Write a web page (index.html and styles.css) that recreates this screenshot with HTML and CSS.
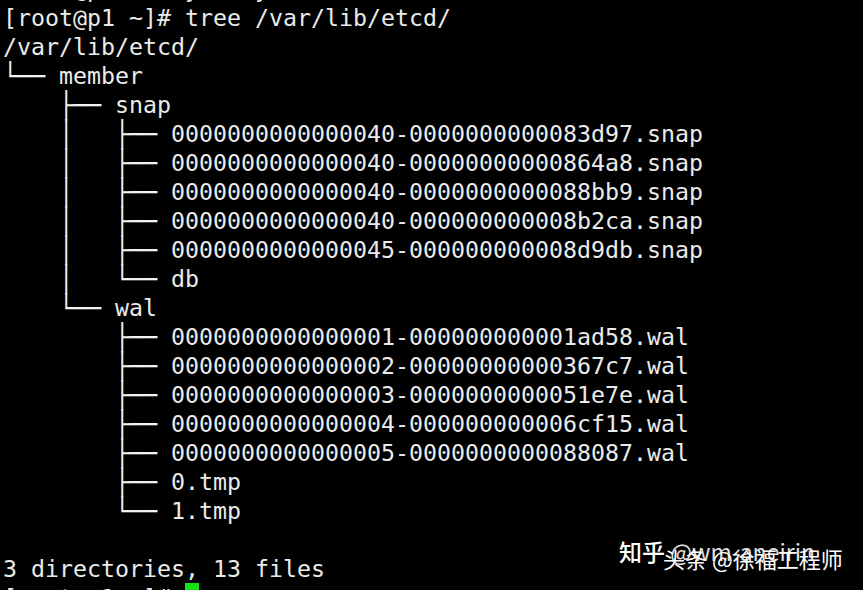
FILE: index.html
```html
<!DOCTYPE html>
<html lang="en">
<head>
<meta charset="utf-8">
<title>tree /var/lib/etcd/</title>
<link rel="stylesheet" href="styles.css">
</head>
<body>
<main class="term">
<div class="line">[root@p1 ~]# yum -y install tree</div>
<div class="line">[root@p1 ~]# tree /var/lib/etcd/</div>
<div class="line">/var/lib/etcd/</div>
<div class="line"><span class="br">└──</span> member</div>
<div class="line"><span class="br">    ├──</span> snap</div>
<div class="line"><span class="br">    │   ├──</span> 0000000000000040-0000000000083d97.snap</div>
<div class="line"><span class="br">    │   ├──</span> 0000000000000040-00000000000864a8.snap</div>
<div class="line"><span class="br">    │   ├──</span> 0000000000000040-0000000000088bb9.snap</div>
<div class="line"><span class="br">    │   ├──</span> 0000000000000040-000000000008b2ca.snap</div>
<div class="line"><span class="br">    │   ├──</span> 0000000000000045-000000000008d9db.snap</div>
<div class="line"><span class="br">    │   └──</span> db</div>
<div class="line"><span class="br">    └──</span> wal</div>
<div class="line"><span class="br">        ├──</span> 0000000000000001-000000000001ad58.wal</div>
<div class="line"><span class="br">        ├──</span> 0000000000000002-00000000000367c7.wal</div>
<div class="line"><span class="br">        ├──</span> 0000000000000003-0000000000051e7e.wal</div>
<div class="line"><span class="br">        ├──</span> 0000000000000004-000000000006cf15.wal</div>
<div class="line"><span class="br">        ├──</span> 0000000000000005-0000000000088087.wal</div>
<div class="line"><span class="br">        ├──</span> 0.tmp</div>
<div class="line"><span class="br">        └──</span> 1.tmp</div>
<div class="line"> </div>
<div class="line">3 directories, 13 files</div>
<div class="line">[root@p1 ~]# <span class="cursor"></span></div>
</main>
<div class="wm wm-zhihu">知乎 <span class="wm-user">@wm-aneirin</span></div>
<div class="wm wm-toutiao">头条 @徐福工程师</div>
</body>
</html>
```
FILE: styles.css
```css
html, body {
  margin: 0;
  padding: 0;
  background: #000;
  height: 100%;
  overflow: hidden;
}
body {
  position: relative;
}
.term {
  margin-top: -26.5px;
  padding-left: 3px;
  font-family: "DejaVu Sans Mono", monospace;
  font-size: 23.25px;
  line-height: 29px;
  color: #ebebeb;
}
.line {
  height: 29px;
  white-space: pre;
}
.br {
  display: inline-block;
  vertical-align: top;
  transform: scaleY(1.1);
  color: #f2f2f2;
}
.cursor {
  display: inline-block;
  width: 14px;
  height: 29px;
  vertical-align: top;
  background: #16e016;
}
.wm {
  position: absolute;
  font-family: "Noto Sans CJK SC", "Noto Sans", sans-serif;
  font-size: 23px;
  line-height: 23px;
  color: #fff;
  white-space: pre;
}
.wm-zhihu {
  left: 619px;
  top: 540px;
  font-weight: 500;
}
.wm-user {
  color: #e0e0e0;
  font-weight: 400;
}
.wm-toutiao {
  left: 663px;
  top: 547px;
  font-size: 22px;
  line-height: 22px;
}
```
